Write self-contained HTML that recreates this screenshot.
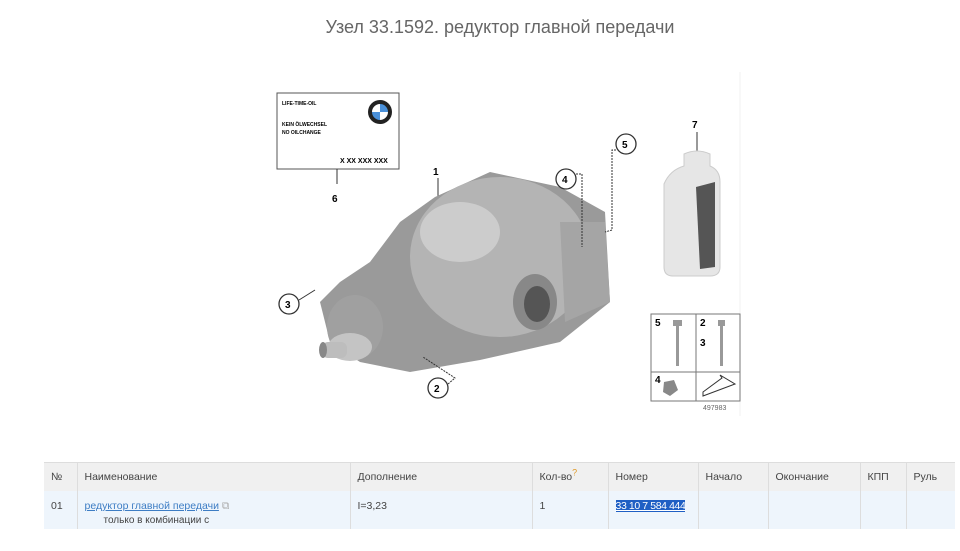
<!DOCTYPE html>
<html><head><meta charset="utf-8"><style>
body{margin:0;width:960px;height:551px;background:#fff;font-family:"Liberation Sans","DejaVu Sans",sans-serif;overflow:hidden;position:relative}
h1{position:absolute;top:17px;left:0;width:1000px;text-align:center;font-weight:normal;font-size:18px;color:#666;margin:0}
table{position:absolute;left:44px;top:462px;border-collapse:collapse;font-size:10.5px;color:#444;width:911px;table-layout:fixed}
th,td{border-left:1px solid #ddd;text-align:left;font-weight:normal;padding:0 7px;vertical-align:top;white-space:nowrap;overflow:hidden}
th{background:#f0f0f0;height:28px;vertical-align:middle;border-top:1px solid #ddd}
td{background:#eef5fc;height:38px;padding-top:9px;box-sizing:border-box}
tr>*:first-child{border-left:none}
a{color:#3d7dc4;text-decoration:underline}
.sel{background:#1f5fc4;color:#fff;text-decoration:underline}
sup{line-height:0;color:#e09b2b;font-size:9px}
</style></head><body>
<h1>Узел 33.1592. редуктор главной передачи</h1>
<svg style="position:absolute;left:260px;top:72px" width="482" height="344" viewBox="0 0 482 344" font-family="Liberation Sans,sans-serif" font-weight="bold">
<line x1="480" y1="0" x2="480" y2="344" stroke="#f2f2f2"/>
<rect x="17" y="21" width="122" height="76" fill="#fff" stroke="#555"/>
<text x="22" y="33" font-size="5">LIFE-TIME-OIL</text>
<text x="22" y="54" font-size="5">KEIN ÖLWECHSEL</text>
<text x="22" y="62" font-size="5">NO OILCHANGE</text>
<text x="80" y="91" font-size="7">X XX XXX XXX</text>
<circle cx="120" cy="40" r="12" fill="#222"/><path d="M120 32 A8 8 0 0 1 128 40 L120 40Z M120 48 A8 8 0 0 1 112 40 L120 40Z" fill="#4a90d9"/><path d="M128 40 A8 8 0 0 1 120 48 L120 40Z M112 40 A8 8 0 0 1 120 32 L120 40Z" fill="#fff"/>
<line x1="77" y1="97" x2="77" y2="112" stroke="#333"/><text x="72" y="130" font-size="10">6</text>
<text x="173" y="103" font-size="10">1</text><line x1="178" y1="106" x2="178" y2="127" stroke="#333"/>
<path d="M140 150 L175 125 L230 100 L300 115 L345 140 L350 230 L300 270 L220 288 L150 300 L100 290 L70 270 L60 230 L80 210 L110 190Z" fill="#9a9a9a"/>
<ellipse cx="240" cy="185" rx="90" ry="80" fill="#b4b4b4"/>
<ellipse cx="200" cy="160" rx="40" ry="30" fill="#ccc"/>
<path d="M300 150 L345 150 L350 230 L305 250Z" fill="#a5a5a5"/>
<ellipse cx="275" cy="230" rx="22" ry="28" fill="#888"/><ellipse cx="277" cy="232" rx="13" ry="18" fill="#555"/>
<ellipse cx="95" cy="255" rx="28" ry="32" fill="#a0a0a0"/><ellipse cx="90" cy="275" rx="22" ry="14" fill="#c4c4c4"/>
<rect x="62" y="270" width="25" height="16" rx="6" fill="#bdbdbd"/><ellipse cx="63" cy="278" rx="4" ry="8" fill="#888"/>
<circle cx="29" cy="232" r="10" fill="#fff" stroke="#333" stroke-width="1.3"/><text x="25" y="236" font-size="10">3</text><line x1="39" y1="228" x2="55" y2="218" stroke="#333"/>
<circle cx="178" cy="316" r="10" fill="#fff" stroke="#333" stroke-width="1.3"/><text x="174" y="320" font-size="10">2</text><path d="M188 312 L195 306 L163 285" stroke="#333" fill="none" stroke-dasharray="2 1"/>
<circle cx="306" cy="107" r="10" fill="#fff" stroke="#333" stroke-width="1.3"/><text x="302" y="111" font-size="10">4</text><path d="M316 102 L322 102 L322 175" stroke="#333" fill="none" stroke-dasharray="2 1"/>
<circle cx="366" cy="72" r="10" fill="#fff" stroke="#333" stroke-width="1.3"/><text x="362" y="76" font-size="10">5</text><path d="M356 78 L352 78 L352 158 L345 160" stroke="#333" fill="none" stroke-dasharray="2 1"/>
<text x="432" y="56" font-size="10">7</text><line x1="437" y1="60" x2="437" y2="80" stroke="#333"/>
<path d="M424 82 Q437 76 450 82 L450 94 Q460 98 460 110 L460 195 Q460 204 450 204 L413 204 Q404 204 404 195 L404 112 Q410 98 424 94Z" fill="#e6e6e6" stroke="#ccc"/>
<path d="M436 115 L455 110 L455 195 L440 197Z" fill="#555"/>
<rect x="391" y="242" width="89" height="87" fill="#fff" stroke="#777"/>
<line x1="436" y1="242" x2="436" y2="329" stroke="#777"/><line x1="391" y1="300" x2="480" y2="300" stroke="#777"/>
<text x="395" y="254" font-size="10">5</text><text x="440" y="254" font-size="10">2</text><text x="440" y="274" font-size="10">3</text><text x="395" y="311" font-size="10">4</text>
<rect x="413" y="248" width="9" height="6" fill="#999"/><rect x="416" y="254" width="3" height="40" fill="#999"/>
<rect x="458" y="248" width="7" height="6" fill="#999"/><rect x="460" y="254" width="3" height="40" fill="#999"/>
<path d="M404 310 L414 308 L418 318 L410 324 L403 320Z" fill="#888"/>
<path d="M443 320 L462 306 L460 303 L475 312 L443 324Z" fill="#fff" stroke="#333"/>
<text x="443" y="338" font-size="7" font-weight="normal" fill="#666">497983</text>
</svg>
<table><colgroup><col style="width:33px"><col style="width:273px"><col style="width:182px"><col style="width:76px"><col style="width:90px"><col style="width:70px"><col style="width:92px"><col style="width:46px"><col></colgroup>
<tr><th>№</th><th>Наименование</th><th>Дополнение</th><th>Кол-во<sup>?</sup></th><th>Номер</th><th>Начало</th><th>Окончание</th><th>КПП</th><th>Руль</th></tr>
<tr><td>01</td><td><a>редуктор главной передачи</a> <span style="color:#aaa">⧉</span><div style="padding-left:19px;font-size:10px;margin-top:2px">только в комбинации с</div></td><td>I=3,23</td><td>1</td><td><span class="sel" style="letter-spacing:-0.4px">33 10 7 584 444</span></td><td></td><td></td><td></td><td></td></tr></table>
</body></html>
